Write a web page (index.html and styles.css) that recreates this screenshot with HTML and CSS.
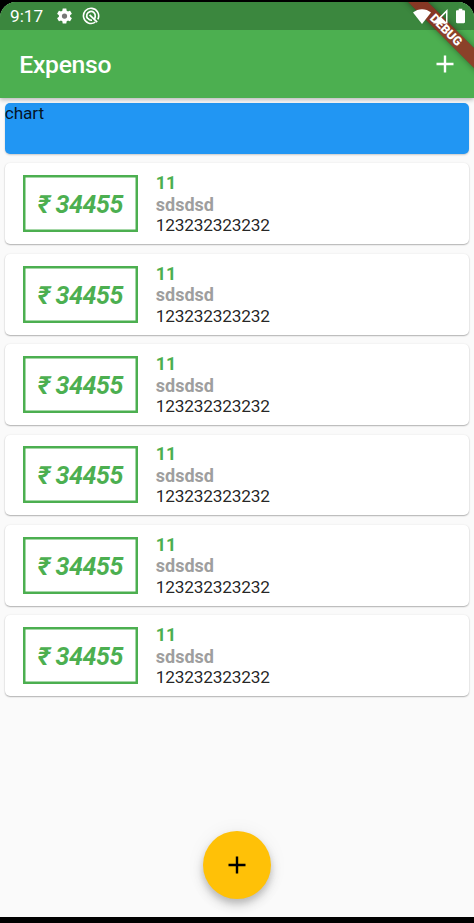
FILE: index.html
```html
<!DOCTYPE html>
<html lang="en">
<head>
<meta charset="utf-8">
<title>Expenso</title>
<link rel="stylesheet" href="styles.css">
</head>
<body>
<div class="screen">
  <header class="top">
    <div class="status">
      <span class="time">9:17</span>
      <svg class="gear" viewBox="2 2 20 20"><circle cx="12" cy="12" r="4" fill="#777"/><path fill="#fff" d="M19.43 12.98c.04-.32.07-.64.07-.98s-.03-.66-.07-.98l2.11-1.65c.19-.15.24-.42.12-.64l-2-3.46c-.12-.22-.39-.3-.61-.22l-2.49 1c-.52-.4-1.08-.73-1.69-.98l-.38-2.65C14.46 2.18 14.25 2 14 2h-4c-.25 0-.46.18-.49.42l-.38 2.65c-.61.25-1.17.59-1.69.98l-2.49-1c-.23-.09-.49 0-.61.22l-2 3.46c-.13.22-.07.49.12.64l2.11 1.65c-.04.32-.07.65-.07.98s.03.66.07.98l-2.11 1.65c-.19.15-.24.42-.12.64l2 3.46c.12.22.39.3.61.22l2.49-1c.52.4 1.08.73 1.69.98l.38 2.65c.03.24.24.42.49.42h4c.25 0 .46-.18.49-.42l.38-2.65c.61-.25 1.17-.59 1.69-.98l2.49 1c.23.09.49 0 .61-.22l2-3.46c.12-.22.07-.49-.12-.64l-2.11-1.65zM12 15.500a3.500 3.500 0 1 1 0-7 3.500 3.500 0 0 1 0 7z"/></svg>
      <svg class="sync" viewBox="0 0 18 18" fill="none" stroke="#fff"><path stroke-width="1.600" d="M13.300 15.200A7.600 7.600 0 1 1 15.800 12.400"/><path stroke-width="1.700" d="M5.600 11.400A4.300 4.300 0 1 1 13.200 9.600c0 1-.3 1.700-.8 2.400M7.600 7.800l7.600 7.400M5.800 11.200c1.300 1.800 2.600 2.200 4.200 2"/></svg>
    </div>
    <div class="appbar">
      <h1>Expenso</h1>
      <svg class="add" viewBox="0 0 18 18"><path stroke="#fff" stroke-width="2.400" d="M9 .5v17M.5 9h17"/></svg>
    </div>
  </header>
  <main>
    <section class="chart">chart</section>
    <article class="card"><div class="amount">₹ 34455</div><div class="info"><b>11</b><strong>sdsdsd</strong><span>123232323232</span></div></article>
    <article class="card"><div class="amount">₹ 34455</div><div class="info"><b>11</b><strong>sdsdsd</strong><span>123232323232</span></div></article>
    <article class="card"><div class="amount">₹ 34455</div><div class="info"><b>11</b><strong>sdsdsd</strong><span>123232323232</span></div></article>
    <article class="card"><div class="amount">₹ 34455</div><div class="info"><b>11</b><strong>sdsdsd</strong><span>123232323232</span></div></article>
    <article class="card"><div class="amount">₹ 34455</div><div class="info"><b>11</b><strong>sdsdsd</strong><span>123232323232</span></div></article>
    <article class="card"><div class="amount">₹ 34455</div><div class="info"><b>11</b><strong>sdsdsd</strong><span>123232323232</span></div></article>
  </main>
  <div class="fab"><svg viewBox="0 0 18 18"><path stroke="#000" stroke-width="2.400" d="M9 .5v17M.5 9h17"/></svg></div>
  <div class="ribbon">DEBUG</div>
  <div class="indicators">
    <svg class="wifi" viewBox="0 0 18 15"><path fill="#fff" d="M0 3.600C5-.9 13-.9 18 3.600L9 15z"/></svg>
    <svg class="signal" viewBox="0 0 15 15"><path fill="#fff" fill-rule="evenodd" d="M14.500 0v14.500H0zM13 3.700L8.300 8.400l4.700 4.700z"/></svg>
    <svg class="battery" viewBox="0 0 10 16"><path fill="#fff" d="M3 0h4v1.700h1.800c.7 0 1.200.5 1.200 1.200v11.900c0 .7-.5 1.200-1.200 1.200H1.200C.5 16 0 15.500 0 14.800V2.900C0 2.200.5 1.700 1.200 1.700H3z"/></svg>
  </div>
</div>
</body>
</html>
```
FILE: styles.css
```css
* { box-sizing: border-box; }
body {
  margin: 0;
  background: #000;
  font-family: Roboto, "Liberation Sans", sans-serif;
}
.screen {
  position: relative;
  width: 474px;
  height: 915px;
  margin-top: 2px;
  background: #fafafa;
  border-radius: 16px 16px 0 0;
  overflow: hidden;
}
.top {
  position: relative;
  background: #4caf50;
  box-shadow: 0 1px 4px rgba(0,0,0,.2), 0 3px 5px rgba(0,0,0,.1);
}
.status {
  display: flex;
  align-items: center;
  height: 28px;
  padding: 0 10px;
  background: #3b873e;
  color: #fff;
}
.time { width: 47px; font-size: 17.200px; }
.gear { width: 15px; height: 16px; margin-right: 10px; }
.sync { width: 18px; height: 18px; }
.indicators {
  position: absolute;
  top: 6px;
  right: 9px;
  display: flex;
  align-items: center;
}
.wifi { width: 18px; height: 15px; }
.signal { width: 15px; height: 15px; margin: 0 8px 0 2px; }
.battery { width: 9px; height: 16px; }
.appbar {
  display: flex;
  align-items: center;
  justify-content: space-between;
  height: 68px;
  padding: 0 20px 0 19.300px;
}
h1 { margin: 2px 0 0; color: #fff; font-size: 24.700px; font-weight: 500; letter-spacing: -.3px; line-height: 28px; }
.add { width: 18px; height: 18px; }
main { padding: 4.600px 4.800px 0; }
.chart {
  height: 51px;
  margin-bottom: 9.700px;
  border-radius: 5px;
  background: #2196f3;
  color: rgba(0,0,0,.87);
  font-size: 17.300px;
  letter-spacing: -.15px;
  line-height: 20px;
  box-shadow: 0 1px 2px rgba(0,0,0,.2);
}
.card {
  display: flex;
  align-items: center;
  height: 80.800px;
  margin-bottom: 9.650px;
  padding-left: 18.100px;
  border-radius: 5px;
  background: #fff;
  box-shadow: 0 1px 1.500px rgba(0,0,0,.28), 0 0 2px rgba(0,0,0,.08);
}
.amount {
  width: 114.700px;
  height: 57px;
  margin-right: 18.200px;
  box-shadow: inset 0 0 0 2.500px #4caf50;
  color: #4caf50;
  font-size: 25px;
  font-weight: 700;
  font-style: italic;
  letter-spacing: -.4px;
  line-height: 59px;
  text-align: center;
  white-space: nowrap;
}
.info { display: flex; flex-direction: column; }
.info b { color: #4caf50; font-size: 18px; line-height: 21.500px; }
.info strong { color: #9e9e9e; font-size: 18px; line-height: 21.500px; }
.info span { color: rgba(0,0,0,.87); font-size: 17.300px; letter-spacing: -.22px; line-height: 20px; }
.fab {
  position: absolute;
  left: 203px;
  top: 828.500px;
  display: grid;
  place-items: center;
  width: 68px;
  height: 68px;
  border-radius: 50%;
  background: #ffc107;
  box-shadow: 0 4px 6px rgba(0,0,0,.14), 0 7px 12px rgba(0,0,0,.12), 0 1px 20px rgba(0,0,0,.06);
}
.fab svg { width: 18px; height: 18px; }
.ribbon {
  position: absolute;
  left: 383.500px;
  top: 20.800px;
  width: 124px;
  height: 14px;
  background: rgba(160,28,28,.75);
  color: #fff;
  font-size: 12.300px;
  font-weight: 900;
  line-height: 14px;
  text-align: center;
  transform: rotate(45deg);
  box-shadow: 0 0 6px rgba(0,0,0,.4);
}
```
